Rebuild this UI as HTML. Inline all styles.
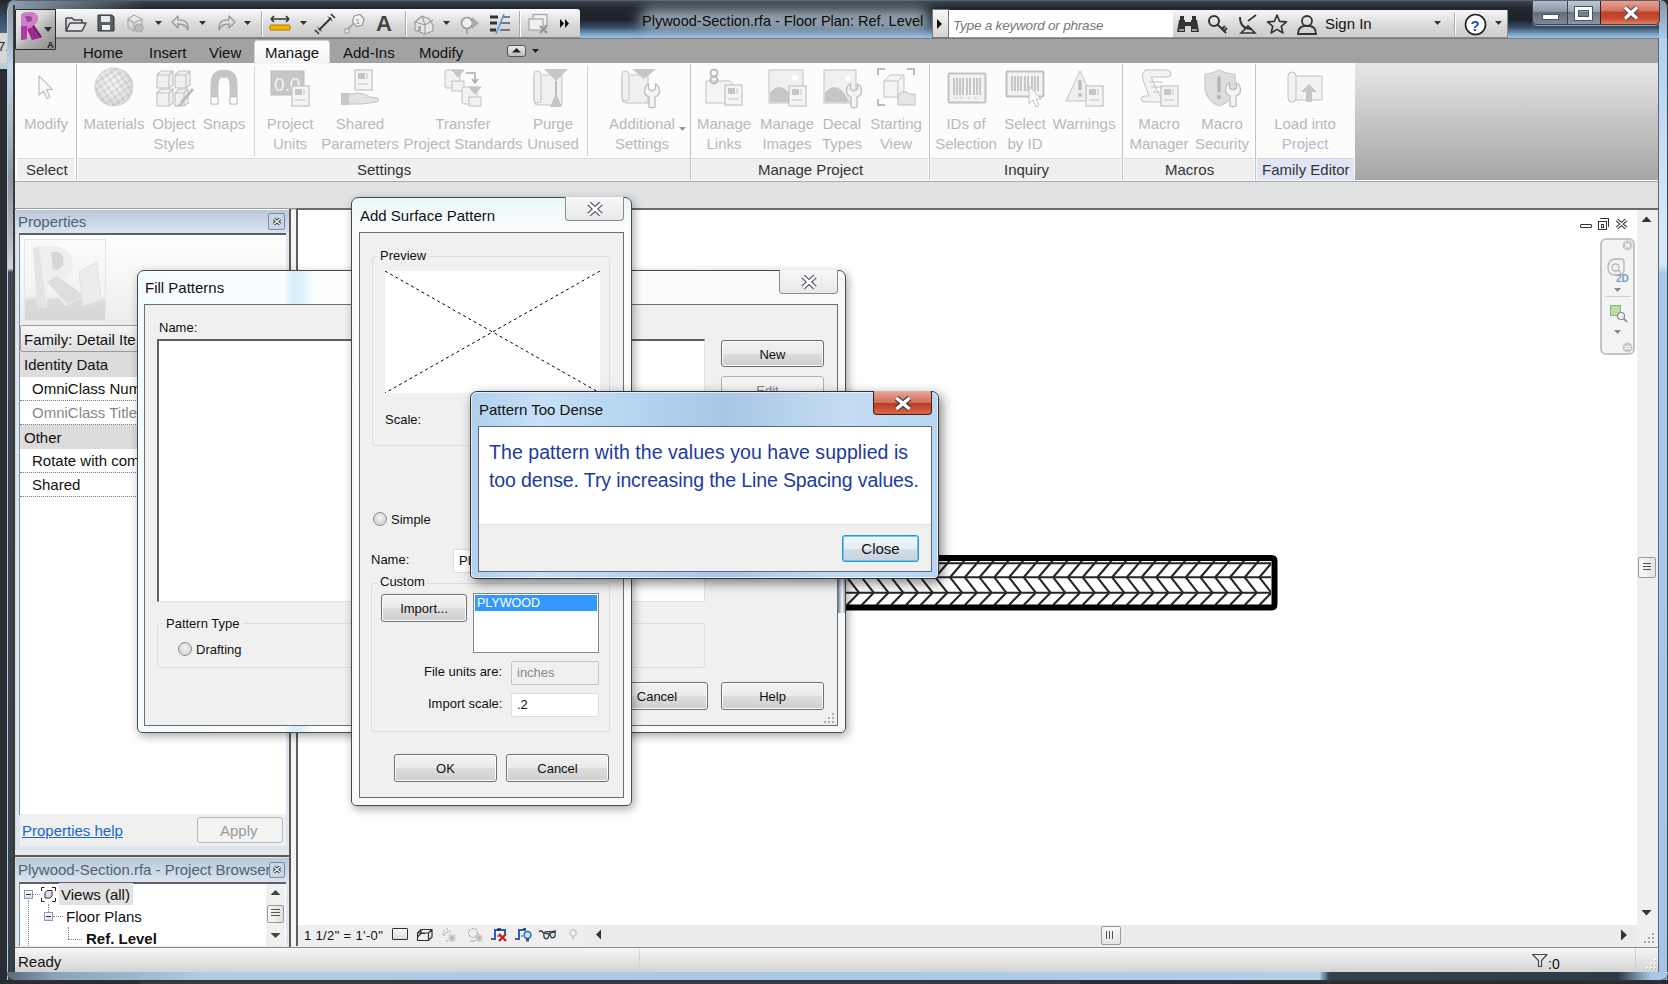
<!DOCTYPE html>
<html><head><meta charset="utf-8">
<style>
*{margin:0;padding:0;box-sizing:border-box}
html,body{width:1668px;height:984px;overflow:hidden;background:#2b2d33;font-family:"Liberation Sans",sans-serif;}
.a{position:absolute}
.t{position:absolute;white-space:nowrap;line-height:1}
</style></head><body>
<!-- desktop strip left -->
<div class="a" style="left:0;top:0;width:8px;height:984px;background:#2a2c33"></div>
<!-- window frame -->
<div class="a" style="left:0;top:33px;width:8px;height:31px;background:#d6d6d6"></div>
<div class="a" style="left:0;top:63px;width:8px;height:6px;background:#b4d4d4"></div>
<div class="a" style="left:0;top:0;width:8px;height:33px;background:linear-gradient(#22262c,#4a6a8a)"></div>
<div class="t" style="left:-2px;top:40px;font-size:13px;color:#222">7.(</div>
<div class="a" id="frame" style="left:7px;top:0;width:1660px;height:980px;border-radius:7px 7px 0 0;border-left:1px solid #555;background:linear-gradient(180deg,#8a9aaa 0%,#b8cadc 5%,#c8dcf0 8%,#a8b8c8 25%,#6e7e90 60%,#7e90a4 100%);"></div>
<div class="a" style="left:1658px;top:38px;width:10px;height:942px;background:linear-gradient(180deg,#b0d0ee 0%,#d4e6f6 18%,#d8e8f8 24%,#a8c8ec 25%,#a4c4e8 100%);border-right:1px solid #3a4a5a;border-left:1px solid #6a7a8a"></div>
<div class="a" style="left:1659px;top:4px;width:8px;height:34px;border-radius:0 6px 0 0;background:linear-gradient(180deg,#8a9cb0,#a8cbec)"></div>
<div class="a" style="left:7px;top:5px;width:8px;height:975px;border-radius:6px 0 0 0;border-left:1px solid #c0c8d0;border-right:2px solid #3a3a3a;background:linear-gradient(180deg,#8e9eae 0%,#a8bccf 4%,#c4d8ec 6.5%,#b4c4d4 10%,#a4b4c4 13%,#8a96a2 18%,#b8c2cc 25%,#d0d8e0 27%,#3a4858 27.4%,#34424f 100%)"></div>
<!-- title glass -->
<div class="a" style="left:15px;top:0px;width:1644px;height:39px;border-top:1px solid #5a6068;background:linear-gradient(180deg,#3a4450 0%,#202830 20%,#1c232c 50%,#3a5068 70%,#7ea4c8 88%,#a8cdef 100%)"></div>
<div class="a" style="left:15px;top:1px;width:130px;height:9px;background:linear-gradient(90deg,#8a9aaa,rgba(134,150,166,0))"></div>
<div class="a" style="left:640px;top:9px;width:290px;height:22px;border-radius:11px;background:rgba(185,200,215,0.8);filter:blur(7px)"></div>
<!-- tabs row -->
<div class="a" style="left:15px;top:38px;width:1644px;height:25px;background:#a2a2a2;border-top:1px solid #7a7a7a"></div>
<!-- ribbon body -->
<div class="a" style="left:15px;top:63px;width:1643px;height:118px;background:#fcfcfc"></div>
<!-- gray strip -->
<div class="a" style="left:15px;top:181px;width:1644px;height:28px;background:#e1e2e4;border-top:1px solid #a7a7a7;border-bottom:1px solid #9a9a9a"></div>



<!-- ===== TABS ===== -->
<div class="a" style="left:254px;top:40px;width:76px;height:24px;background:linear-gradient(#ffffff,#f4f4f4);border:1px solid #d0d0d0;border-bottom:none;border-radius:3px 3px 0 0"></div>
<div class="t" style="left:83px;top:45px;font-size:15px;color:#111">Home</div>
<div class="t" style="left:149px;top:45px;font-size:15px;color:#111">Insert</div>
<div class="t" style="left:209px;top:45px;font-size:15px;color:#111">View</div>
<div class="t" style="left:265px;top:45px;font-size:15px;color:#111">Manage</div>
<div class="t" style="left:343px;top:45px;font-size:15px;color:#111">Add-Ins</div>
<div class="t" style="left:419px;top:45px;font-size:15px;color:#111">Modify</div>
<div class="a" style="left:507px;top:45px;width:19px;height:12px;border:1px solid #555;border-radius:3px;background:linear-gradient(#eee,#bbb)"></div>
<svg class="a" style="left:512px;top:48px" width="9" height="5"><path d="M0 4.5 L4.5 0 L9 4.5 Z" fill="#222"/></svg>
<svg class="a" style="left:532px;top:49px" width="7" height="4"><path d="M0 0h7l-3.5 4z" fill="#222"/></svg>
<!-- ===== RIBBON ===== -->
<div class="a" style="left:1355px;top:63px;width:303px;height:117px;background:linear-gradient(#e6e6e6,#a6a6a6)"></div>
<!-- label row -->
<div class="a" style="left:17px;top:158px;width:57px;height:22px;background:#efefef;border-top:1px solid #dadada"></div>
<div class="a" style="left:78px;top:158px;width:612px;height:22px;background:#efefef;border-top:1px solid #dadada"></div>
<div class="a" style="left:692px;top:158px;width:236px;height:22px;background:#efefef;border-top:1px solid #dadada"></div>
<div class="a" style="left:931px;top:158px;width:190px;height:22px;background:#efefef;border-top:1px solid #dadada"></div>
<div class="a" style="left:1124px;top:158px;width:130px;height:22px;background:#efefef;border-top:1px solid #dadada"></div>
<div class="a" style="left:1257px;top:158px;width:97px;height:22px;background:#dfe5f4;border-top:1px solid #d4dae8"></div>
<div class="a" style="left:76px;top:64px;width:1px;height:116px;background:#c4c4c4"></div>
<div class="a" style="left:690px;top:64px;width:1px;height:116px;background:#c4c4c4"></div>
<div class="a" style="left:929px;top:64px;width:1px;height:116px;background:#c4c4c4"></div>
<div class="a" style="left:1122px;top:64px;width:1px;height:116px;background:#c4c4c4"></div>
<div class="a" style="left:1255px;top:64px;width:1px;height:116px;background:#c4c4c4"></div>
<div class="a" style="left:254px;top:66px;width:1px;height:90px;background:#d4d4d4"></div>
<div class="a" style="left:587px;top:66px;width:1px;height:90px;background:#d4d4d4"></div>
<div class="t" style="left:26px;top:162px;font-size:15px;color:#333">Select</div>
<div class="t" style="left:357px;top:162px;font-size:15px;color:#333">Settings</div>
<div class="t" style="left:758px;top:162px;font-size:15px;color:#333">Manage Project</div>
<div class="t" style="left:1004px;top:162px;font-size:15px;color:#333">Inquiry</div>
<div class="t" style="left:1165px;top:162px;font-size:15px;color:#333">Macros</div>
<div class="t" style="left:1262px;top:162px;font-size:15px;color:#333">Family Editor</div>
<div class="t" style="left:-54px;width:200px;text-align:center;top:116px;font-size:15px;color:#b5b9c0">Modify</div>
<div class="t" style="left:14px;width:200px;text-align:center;top:116px;font-size:15px;color:#b5b9c0">Materials</div>
<div class="t" style="left:74px;width:200px;text-align:center;top:116px;font-size:15px;color:#b5b9c0">Object</div>
<div class="t" style="left:74px;width:200px;text-align:center;top:136px;font-size:15px;color:#b5b9c0">Styles</div>
<div class="t" style="left:124px;width:200px;text-align:center;top:116px;font-size:15px;color:#b5b9c0">Snaps</div>
<div class="t" style="left:190px;width:200px;text-align:center;top:116px;font-size:15px;color:#b5b9c0">Project</div>
<div class="t" style="left:190px;width:200px;text-align:center;top:136px;font-size:15px;color:#b5b9c0">Units</div>
<div class="t" style="left:260px;width:200px;text-align:center;top:116px;font-size:15px;color:#b5b9c0">Shared</div>
<div class="t" style="left:260px;width:200px;text-align:center;top:136px;font-size:15px;color:#b5b9c0">Parameters</div>
<div class="t" style="left:363px;width:200px;text-align:center;top:116px;font-size:15px;color:#b5b9c0">Transfer</div>
<div class="t" style="left:363px;width:200px;text-align:center;top:136px;font-size:15px;color:#b5b9c0">Project Standards</div>
<div class="t" style="left:453px;width:200px;text-align:center;top:116px;font-size:15px;color:#b5b9c0">Purge</div>
<div class="t" style="left:453px;width:200px;text-align:center;top:136px;font-size:15px;color:#b5b9c0">Unused</div>
<div class="t" style="left:542px;width:200px;text-align:center;top:116px;font-size:15px;color:#b5b9c0">Additional</div>
<div class="t" style="left:542px;width:200px;text-align:center;top:136px;font-size:15px;color:#b5b9c0">Settings</div>
<div class="t" style="left:624px;width:200px;text-align:center;top:116px;font-size:15px;color:#b5b9c0">Manage</div>
<div class="t" style="left:624px;width:200px;text-align:center;top:136px;font-size:15px;color:#b5b9c0">Links</div>
<div class="t" style="left:687px;width:200px;text-align:center;top:116px;font-size:15px;color:#b5b9c0">Manage</div>
<div class="t" style="left:687px;width:200px;text-align:center;top:136px;font-size:15px;color:#b5b9c0">Images</div>
<div class="t" style="left:742px;width:200px;text-align:center;top:116px;font-size:15px;color:#b5b9c0">Decal</div>
<div class="t" style="left:742px;width:200px;text-align:center;top:136px;font-size:15px;color:#b5b9c0">Types</div>
<div class="t" style="left:796px;width:200px;text-align:center;top:116px;font-size:15px;color:#b5b9c0">Starting</div>
<div class="t" style="left:796px;width:200px;text-align:center;top:136px;font-size:15px;color:#b5b9c0">View</div>
<div class="t" style="left:866px;width:200px;text-align:center;top:116px;font-size:15px;color:#b5b9c0">IDs of</div>
<div class="t" style="left:866px;width:200px;text-align:center;top:136px;font-size:15px;color:#b5b9c0">Selection</div>
<div class="t" style="left:925px;width:200px;text-align:center;top:116px;font-size:15px;color:#b5b9c0">Select</div>
<div class="t" style="left:925px;width:200px;text-align:center;top:136px;font-size:15px;color:#b5b9c0">by ID</div>
<div class="t" style="left:984px;width:200px;text-align:center;top:116px;font-size:15px;color:#b5b9c0">Warnings</div>
<div class="t" style="left:1059px;width:200px;text-align:center;top:116px;font-size:15px;color:#b5b9c0">Macro</div>
<div class="t" style="left:1059px;width:200px;text-align:center;top:136px;font-size:15px;color:#b5b9c0">Manager</div>
<div class="t" style="left:1122px;width:200px;text-align:center;top:116px;font-size:15px;color:#b5b9c0">Macro</div>
<div class="t" style="left:1122px;width:200px;text-align:center;top:136px;font-size:15px;color:#b5b9c0">Security</div>
<div class="t" style="left:1205px;width:200px;text-align:center;top:116px;font-size:15px;color:#b5b9c0">Load into</div>
<div class="t" style="left:1205px;width:200px;text-align:center;top:136px;font-size:15px;color:#b5b9c0">Project</div>
<svg class="a" style="left:679px;top:127px" width="7" height="4"><path d="M0 0h7l-3.5 4z" fill="#999"/></svg>
<!-- ribbon icons -->
<svg class="a" style="left:36px;top:74px" width="20" height="28"><path d="M3 2 L3 21 L7.5 17 L11 24.5 L14 23 L10.5 15.5 L16.5 15.5 Z" fill="#fafafa" stroke="#c2c2c2" stroke-width="1.3" stroke-linejoin="round"/></svg>
<svg class="a" style="left:94px;top:67px" width="40" height="40"><defs><pattern id="chk" width="8" height="8" patternUnits="userSpaceOnUse" patternTransform="rotate(10)"><rect width="8" height="8" fill="#f2f2f2"/><rect width="4" height="4" fill="#cfcfcf"/><rect x="4" y="4" width="4" height="4" fill="#cfcfcf"/></pattern><radialGradient id="sph" cx="0.45" cy="0.45" r="0.6"><stop offset="0" stop-color="#fff" stop-opacity="0.2"/><stop offset="1" stop-color="#bbb" stop-opacity="0.5"/></radialGradient></defs><circle cx="20" cy="20" r="19" fill="url(#chk)"/><circle cx="20" cy="20" r="19" fill="url(#sph)" stroke="#d4d4d4"/></svg>
<svg class="a" style="left:155px;top:69px" width="40" height="40"><g fill="#f0f0f0" stroke="#c2c2c2" stroke-width="1.1"><path d="M2 6 L6 2 L18 2 L18 16 L14 19 L2 19 Z M2 6 L14 6 L14 19 M14 6 L18 2"/><path d="M20 6 L24 2 L35 2 L35 16 L31 19 L20 19 Z M20 6 L31 6 L31 19 M31 6 L35 2"/><path d="M2 24 L6 20 L18 20 L18 34 L14 37 L2 37 Z M2 24 L14 24 L14 37 M14 24 L18 20"/><path d="M20 24 L24 20 L33 20 L33 34 L29 37 L20 37 Z M20 24 L29 24 L29 37 M29 24 L33 20"/></g><path d="M38 20 L26 34" stroke="#bdbdbd" stroke-width="3"/><path d="M26 34 Q22 36 21 38 Q25 38 28 35 Z" fill="#bdbdbd"/></svg>
<svg class="a" style="left:207px;top:68px" width="34" height="40"><path d="M4 36 L4 16 Q4 2 17 2 Q30 2 30 16 L30 36 L23 36 L23 16 Q23 9 17 9 Q11 9 11 16 L11 36 Z" fill="#c6c6c6" stroke="#c8c8c8"/><rect x="4" y="29" width="7" height="7" fill="#fff" stroke="#c2c2c2"/><rect x="23" y="29" width="7" height="7" fill="#fff" stroke="#c2c2c2"/></svg>
<svg class="a" style="left:270px;top:70px" width="42" height="38"><rect x="1" y="1" width="33" height="24" fill="#c6c6c6" stroke="#bbb"/><text x="4" y="21" font-size="19" fill="#f4f4f4" font-family="Liberation Sans">0.0</text><rect x="22" y="16" width="17" height="20" fill="#f4f4f4" stroke="#c2c2c2" stroke-width="1.2"/><rect x="25" y="19" width="7" height="6" fill="#c6c6c6"/><path d="M34 19v6M25 30h10" stroke="#c2c2c2" stroke-width="1"/></svg>
<svg class="a" style="left:340px;top:68px" width="42" height="40"><rect x="15" y="2" width="17" height="20" fill="#f4f4f4" stroke="#c2c2c2" stroke-width="1.2"/><rect x="18" y="5" width="7" height="6" fill="#c6c6c6"/><path d="M27 5v6M18 16h10" stroke="#c2c2c2" stroke-width="1"/><path d="M8 26 L18 25 Q26 26 30 29 L38 30 Q40 33 36 34 L22 36 L8 36 Z" fill="#e2e2e2" stroke="#c2c2c2"/><rect x="1" y="25" width="8" height="12" fill="#c6c6c6"/></svg>
<svg class="a" style="left:442px;top:68px" width="42" height="40"><g stroke="#c2c2c2" fill="#f2f2f2"><path d="M3 4 Q3 2 5 2 L18 2 L18 20 L5 20 Q3 20 3 18 Z"/><path d="M10 2 L22 2 L16 9 Z" fill="#c6c6c6"/><rect x="10" y="13" width="12" height="10"/><path d="M20 21 Q20 19 22 19 L35 19 L35 36 L22 36 Q20 36 20 34 Z"/><path d="M27 19 L39 19 L33 26 Z" fill="#c6c6c6"/><rect x="27" y="29" width="12" height="9"/></g><path d="M24 5 L33 5 L33 14 M30 11 L33 15 L36 11" fill="none" stroke="#aaa" stroke-width="1.5"/></svg>
<svg class="a" style="left:532px;top:67px" width="40" height="42"><g stroke="#c2c2c2" fill="#f0f0f0"><path d="M6 6 Q2 6 2 10 L2 34 Q2 38 6 38 L30 38 L30 8 L10 8"/><rect x="2" y="4" width="7" height="32" rx="3.5"/></g><path d="M12 2 L36 2 L24 14 Z" fill="#c6c6c6"/><path d="M24 14 L24 28" stroke="#bbb" stroke-width="2"/><path d="M18 40 L24 26 L30 40 Z" fill="#c6c6c6"/></svg>
<svg class="a" style="left:620px;top:67px" width="42" height="42"><g stroke="#c2c2c2" fill="#f0f0f0"><path d="M6 6 Q2 6 2 10 L2 32 Q2 36 6 36 L28 36 L28 8 L10 8"/><rect x="2" y="4" width="7" height="30" rx="3.5"/></g><path d="M12 2 L36 2 L24 12 Z" fill="#c6c6c6"/><path d="M28.5 17 L28.5 22 L32 24 L35.5 22 L35.5 17 Q39.5 19 39.5 24 Q39.5 28.5 35 30 L35 40 Q32 41.5 29 40 L29 30 Q24.5 28.5 24.5 24 Q24.5 19 28.5 17 Z" fill="#f4f4f4" stroke="#bdbdbd" stroke-width="1.3"/></svg>
<svg class="a" style="left:704px;top:67px" width="42" height="42"><path d="M2 14 L26 14 L32 20 L32 36 L2 36 Z" fill="#f4f4f4" stroke="#c2c2c2"/><circle cx="10" cy="6" r="3.5" fill="none" stroke="#bbb" stroke-width="2"/><circle cx="10" cy="13" r="3.5" fill="none" stroke="#bbb" stroke-width="2"/><rect x="21" y="18" width="17" height="20" fill="#f4f4f4" stroke="#c2c2c2" stroke-width="1.2"/><rect x="24" y="21" width="7" height="6" fill="#c6c6c6"/><path d="M33 21v6M24 32h10" stroke="#c2c2c2" stroke-width="1"/></svg>
<svg class="a" style="left:767px;top:67px" width="42" height="42"><rect x="2" y="3" width="34" height="33" fill="#f0f0f0" stroke="#c2c2c2"/><path d="M3 35 L3 26 Q12 14 22 26 L28 35 Z" fill="#c6c6c6"/><circle cx="28" cy="11" r="3" fill="#fff"/><rect x="22" y="19" width="17" height="20" fill="#f4f4f4" stroke="#c2c2c2" stroke-width="1.2"/><rect x="25" y="22" width="7" height="6" fill="#c6c6c6"/><path d="M34 22v6M25 33h10" stroke="#c2c2c2" stroke-width="1"/></svg>
<svg class="a" style="left:822px;top:67px" width="42" height="42"><rect x="2" y="3" width="32" height="33" fill="#f0f0f0" stroke="#c2c2c2"/><path d="M3 35 L3 26 Q12 14 22 26 L28 35 Z" fill="#c6c6c6"/><circle cx="26" cy="11" r="3" fill="#fff"/><path d="M28.5 17 L28.5 22 L32 24 L35.5 22 L35.5 17 Q39.5 19 39.5 24 Q39.5 28.5 35 30 L35 40 Q32 41.5 29 40 L29 30 Q24.5 28.5 24.5 24 Q24.5 19 28.5 17 Z" fill="#f4f4f4" stroke="#bdbdbd" stroke-width="1.3"/></svg>
<svg class="a" style="left:876px;top:67px" width="42" height="42"><path d="M2 8 L2 2 L9 2 M31 2 L38 2 L38 8 M2 32 L2 38 L9 38 M38 32" fill="none" stroke="#bbb" stroke-width="2"/><path d="M8 14 L14 8 L28 8 L28 24 L22 30 L8 30 Z M8 14 L22 14 L22 30 M22 14 L28 8" fill="#f4f4f4" stroke="#c2c2c2"/><path d="M22 28 L26 25 L31 25 L33 27 L39 27 L39 38 L22 38 Z" fill="#e6e6e6" stroke="#c2c2c2"/></svg>
<svg class="a" style="left:947px;top:72px" width="42" height="34"><rect x="1.5" y="1.5" width="37" height="29" rx="1" fill="#f2f2f2" stroke="#c2c2c2" stroke-width="2"/><path d="M7 6v17M10 6v17M13 6v17M16 6v17M20 6v17M23 6v17M27 6v17M30 6v17M33 6v17" stroke="#bbb" stroke-width="1.6"/><path d="M7 26h3M13 26h3M20 26h3M27 26h3" stroke="#ccc"/></svg>
<svg class="a" style="left:1005px;top:70px" width="42" height="40"><rect x="1.5" y="1.5" width="37" height="25" rx="1" fill="#f2f2f2" stroke="#c2c2c2" stroke-width="2"/><path d="M7 6v15M10 6v15M13 6v15M16 6v15M20 6v15M23 6v15M27 6v15M30 6v15M33 6v15" stroke="#bbb" stroke-width="1.6"/><path d="M24 16 L24 34 L28 30 L31 37 L34 35 L31 29 L36 29 Z" fill="#fafafa" stroke="#c2c2c2"/></svg>
<svg class="a" style="left:1064px;top:68px" width="42" height="40"><path d="M16 3 L30 33 L2 33 Z" fill="#efefef" stroke="#c2c2c2" stroke-linejoin="round"/><path d="M16 12v10" stroke="#bdbdbd" stroke-width="3.5"/><circle cx="16" cy="27" r="2" fill="#bdbdbd"/><rect x="22" y="18" width="17" height="20" fill="#f4f4f4" stroke="#c2c2c2" stroke-width="1.2"/><rect x="25" y="21" width="7" height="6" fill="#c6c6c6"/><path d="M34 21v6M25 32h10" stroke="#c2c2c2" stroke-width="1"/></svg>
<svg class="a" style="left:1139px;top:68px" width="42" height="40"><path d="M6 2 L28 2 Q32 2 32 6 Q32 9 28 9 L12 9 Q14 12 16 18 L24 34 L6 34 Q2 34 2 31 Q2 28 6 28 L10 28 L4 12 Q2 6 6 2 Z" fill="#f2f2f2" stroke="#c2c2c2"/><path d="M10 14h14M12 19h10M14 24h8" stroke="#c2c2c2"/><rect x="22" y="18" width="17" height="20" fill="#f4f4f4" stroke="#c2c2c2" stroke-width="1.2"/><rect x="25" y="21" width="7" height="6" fill="#c6c6c6"/><path d="M34 21v6M25 32h10" stroke="#c2c2c2" stroke-width="1"/></svg>
<svg class="a" style="left:1203px;top:68px" width="40" height="40"><path d="M16 2 Q24 6 32 6 L32 18 Q32 32 16 38 Q2 32 2 18 L2 6 Q8 6 16 2 Z" fill="#dedede" stroke="#cacaca" stroke-width="1.2"/><path d="M16 10v13" stroke="#b4b4b4" stroke-width="3.5" stroke-linecap="round"/><circle cx="16" cy="29" r="2.2" fill="#b4b4b4"/><path d="M26.5 15 L26.5 20 L30 22 L33.5 20 L33.5 15 Q37.5 17 37.5 22 Q37.5 26.5 33 28 L33 38 Q30 39.5 27 38 L27 28 Q22.5 26.5 22.5 22 Q22.5 17 26.5 15 Z" fill="#f4f4f4" stroke="#bdbdbd" stroke-width="1.3"/></svg>
<svg class="a" style="left:1287px;top:70px" width="40" height="36"><g stroke="#c2c2c2" fill="#f2f2f2"><path d="M6 6 L35 6 L35 30 L6 30"/><rect x="1" y="2" width="8" height="30" rx="4"/></g><path d="M14 22 L22 14 L30 22 L25 22 L25 32 L19 32 L19 22 Z" fill="#c6c6c6"/></svg>
<!-- ===== TITLE BAR CONTENT ===== -->
<div class="t" style="left:642px;top:14px;font-size:14.5px;color:#0a0a0a">Plywood-Section.rfa - Floor Plan: Ref. Level</div>
<!-- app button -->
<div class="a" style="left:15px;top:9px;width:41px;height:41px;background:linear-gradient(140deg,#eeeeee 0%,#d6d6d6 40%,#b0b0b0 60%,#8c8c8c 100%);border:1px solid #2a2a2a;border-radius:1px"></div>
<svg class="a" style="left:18px;top:11px" width="26" height="30" viewBox="0 0 26 30"><path d="M3 4 Q4 1 10 1 L14 1 Q21 2 20 9 Q19 14 14 15 L22 27 L14 29 L9 18 L9 28 L3 29 Z" fill="#d080c8"/><path d="M7 5 L12 5 Q15 6 14 9 Q13 11 9 11 Z" fill="#9a4a90"/><path d="M9 18 L14 29 L22 27 L15 16 Z" fill="#a02890"/><path d="M3 15 L9 15 L9 28 L3 29 Z" fill="#b03aa0"/><path d="M14 15 L22 27 L24 26 L16 14 Z" fill="#701a68"/></svg>
<svg class="a" style="left:44px;top:27px" width="9" height="6"><path d="M0 0h8l-4 5z" fill="#2a3040"/></svg>
<div class="t" style="left:47px;top:40px;font-size:9.5px;font-weight:bold;color:#222">A</div>
<!-- QAT -->
<div class="a" style="left:56px;top:9px;width:524px;height:29px;background:linear-gradient(#fafafa,#d9d9d9 55%,#c9c9c9);border-radius:0 3px 0 0;box-shadow:inset 0 -1px 0 #8a8a8a"></div>
<svg class="a" style="left:64px;top:14px" width="24" height="20" viewBox="0 0 24 20"><path d="M2 4 L8 4 L10 6 L18 6 L18 9 M2 4 L2 17 L18 17 L22 9 L6 9 L2 17" fill="#e8e8e8" stroke="#445" stroke-width="1.5" stroke-linejoin="round"/></svg>
<svg class="a" style="left:96px;top:13px" width="20" height="20" viewBox="0 0 20 20"><path d="M2 2h14l2 2v14H2z" fill="#56606c" stroke="#333" stroke-width="1"/><rect x="5" y="3" width="9" height="6" fill="#e8e8e8"/><rect x="6" y="12" width="8" height="5" fill="#f4f4f4"/></svg>
<svg class="a" style="left:124px;top:13px" width="24" height="22"><g fill="none" stroke="#aaa" stroke-width="1.2"><path d="M4 6 L10 2 L18 6 L18 14 L10 18 L4 14 Z M4 6 L10 10 L18 6 M10 10 L10 18"/><circle cx="15" cy="15" r="4" fill="#bbb"/></g></svg>
<svg class="a" style="left:155px;top:21px" width="8" height="5"><path d="M0 0h7l-3.5 4z" fill="#333"/></svg>
<svg class="a" style="left:170px;top:14px" width="22" height="18"><path d="M8 2 L2 8 L8 14 L8 10 Q16 10 18 16 Q19 5 8 6 Z" fill="none" stroke="#999" stroke-width="1.3" stroke-linejoin="round"/></svg>
<svg class="a" style="left:199px;top:21px" width="8" height="5"><path d="M0 0h7l-3.5 4z" fill="#333"/></svg>
<svg class="a" style="left:215px;top:14px" width="22" height="18"><path d="M14 2 L20 8 L14 14 L14 10 Q6 10 4 16 Q3 5 14 6 Z" fill="none" stroke="#999" stroke-width="1.3" stroke-linejoin="round"/></svg>
<svg class="a" style="left:244px;top:21px" width="8" height="5"><path d="M0 0h7l-3.5 4z" fill="#333"/></svg>
<div class="a" style="left:261px;top:11px;width:1px;height:26px;background:#aaa;box-shadow:1px 0 0 #fff"></div>
<svg class="a" style="left:268px;top:14px" width="24" height="18"><path d="M3 5h18M3 5l3-3M3 5l3 3M21 5l-3-3M21 5l-3 3" stroke="#333" stroke-width="1.6" fill="none"/><rect x="2" y="11" width="20" height="5" rx="1" fill="#f0b400" stroke="#b07800"/></svg>
<svg class="a" style="left:300px;top:21px" width="8" height="5"><path d="M0 0h7l-3.5 4z" fill="#333"/></svg>
<svg class="a" style="left:314px;top:13px" width="22" height="22"><path d="M5 17 L17 5" stroke="#333" stroke-width="1.8"/><path d="M3 13 L5 17 L9 19 Z M19 9 L17 5 L13 3 Z" fill="#333"/><path d="M1 17 L5 21 M17 1 L21 5" stroke="#333" stroke-width="1.6"/></svg>
<svg class="a" style="left:344px;top:13px" width="22" height="22"><path d="M10 3 L16 1.5 L20 6 L18.5 12 L12.5 13.5 L8.5 9 Z" fill="#f2f2f2" stroke="#999" stroke-width="1.2"/><text x="11.5" y="11" font-size="8" fill="#888" font-family="Liberation Sans">1</text><path d="M9 11 L3 17" stroke="#999" stroke-width="1.2"/><rect x="1" y="16" width="4" height="4" fill="#eee" stroke="#999"/></svg>
<div class="t" style="left:376px;top:13px;font-size:22px;font-weight:bold;color:#444">A</div>
<div class="a" style="left:405px;top:11px;width:1px;height:26px;background:#aaa;box-shadow:1px 0 0 #fff"></div>
<svg class="a" style="left:413px;top:13px" width="22" height="22"><path d="M2 9 L9 3 L16 6 L20 12 L20 18 L12 21 L2 17 Z" fill="#e6e6e6" stroke="#999" stroke-width="1.2" stroke-linejoin="round"/><path d="M2 9 L12 12 L20 7 M12 12 L12 21 M9 3 L12 12" fill="none" stroke="#999" stroke-width="1.1"/><rect x="5" y="13" width="3" height="5" fill="#aaa"/></svg>
<svg class="a" style="left:443px;top:21px" width="8" height="5"><path d="M0 0h7l-3.5 4z" fill="#333"/></svg>
<svg class="a" style="left:459px;top:13px" width="22" height="22"><circle cx="8" cy="10" r="5.5" fill="#f0f0f0" stroke="#999" stroke-width="1.6"/><path d="M13 4 L20 10 L13 16 Z" fill="#aaa"/><path d="M8 16 V21" stroke="#999" stroke-width="1.4"/></svg>
<svg class="a" style="left:489px;top:13px" width="22" height="22"><path d="M1 4h8M1 10h7M1 17h6" stroke="#333" stroke-width="3"/><path d="M13 4h8M12 10h9M11 17h10" stroke="#555" stroke-width="1.5"/><path d="M7 21 L15 1" stroke="#4a9af0" stroke-width="1.6"/></svg>
<div class="a" style="left:519px;top:11px;width:1px;height:26px;background:#aaa;box-shadow:1px 0 0 #fff"></div>
<svg class="a" style="left:527px;top:13px" width="22" height="22"><g fill="#f0f0f0" stroke="#aaa" stroke-width="1.3"><rect x="6" y="1.5" width="14" height="11"/><rect x="2" y="6" width="14" height="11"/></g><path d="M13 13 L20 20 M20 13 L13 20" stroke="#999" stroke-width="2.4"/></svg>
<svg class="a" style="left:560px;top:19px" width="10" height="9"><path d="M0 0 L4 4.5 L0 9 Z M5 0 L9 4.5 L5 9 Z" fill="#111"/></svg>
<!-- search -->
<div class="a" style="left:932px;top:9px;width:17px;height:29px;background:linear-gradient(#f8f8f8,#d4d4d4);border:1px solid #777"></div>
<svg class="a" style="left:937px;top:19px" width="6" height="10"><path d="M0 0 L5 5 L0 10 Z" fill="#111"/></svg>
<div class="a" style="left:949px;top:10px;width:224px;height:28px;background:#fff;border-bottom:1px solid #999"></div>
<div class="t" style="left:953px;top:19px;font-size:13.5px;letter-spacing:-0.2px;font-style:italic;color:#777">Type a keyword or phrase</div>
<div class="a" style="left:1173px;top:10px;width:335px;height:28px;background:linear-gradient(#f6f6f6,#d8d8d8 60%,#cdcdcd);border:1px solid #8c8c8c;border-left:none;border-top:none"></div>
<svg class="a" style="left:1176px;top:14px" width="24" height="20"><g fill="#333"><path d="M3 6h6v12H1z M15 6h6l2 12h-8z M9 8h6v4H9z"/><rect x="4" y="2" width="4" height="4"/><rect x="16" y="2" width="4" height="4"/></g><path d="M3 16h5M16 16h5" stroke="#fff" stroke-width="1"/></svg>
<svg class="a" style="left:1206px;top:13px" width="24" height="22"><circle cx="8" cy="8" r="5" fill="none" stroke="#333" stroke-width="2"/><path d="M11 11 L20 20 M16 16 L19 13 M18 18 L21 15" stroke="#333" stroke-width="2"/></svg>
<svg class="a" style="left:1236px;top:13px" width="24" height="22"><path d="M5 20 L12 13 L19 20 Z" fill="none" stroke="#333" stroke-width="1.6"/><path d="M4 4 Q4 16 16 16" fill="none" stroke="#333" stroke-width="2"/><path d="M12 8 L20 2" stroke="#333" stroke-width="1.6"/></svg>
<svg class="a" style="left:1266px;top:13px" width="22" height="22"><path d="M11 2 L13.6 8.4 L20.5 8.9 L15.2 13.3 L16.9 20 L11 16.4 L5.1 20 L6.8 13.3 L1.5 8.9 L8.4 8.4 Z" fill="none" stroke="#333" stroke-width="1.6" stroke-linejoin="round"/></svg>
<svg class="a" style="left:1296px;top:13px" width="22" height="22"><circle cx="11" cy="8" r="5" fill="none" stroke="#333" stroke-width="1.8"/><path d="M2 21 Q2 14 8 13 L14 13 Q20 14 20 21 Z" fill="none" stroke="#333" stroke-width="1.8"/></svg>
<div class="t" style="left:1325px;top:16px;font-size:15px;color:#111">Sign In</div>
<svg class="a" style="left:1434px;top:21px" width="8" height="5"><path d="M0 0h7l-3.5 4z" fill="#333"/></svg>
<div class="a" style="left:1454px;top:13px;width:1px;height:22px;background:#aaa;box-shadow:1px 0 0 #fff"></div>
<svg class="a" style="left:1464px;top:13px" width="23" height="23"><circle cx="11.5" cy="11.5" r="10" fill="#fff" stroke="#222" stroke-width="1.6"/><text x="6.5" y="17.5" font-size="15" font-weight="bold" fill="#1a4fb0" font-family="Liberation Sans">?</text></svg>
<svg class="a" style="left:1495px;top:21px" width="8" height="5"><path d="M0 0h7l-3.5 4z" fill="#333"/></svg>
<!-- window controls -->
<div class="a" style="left:1532px;top:1px;width:128px;height:24px;border:1px solid #3a4450;border-top:none;border-radius:0 0 5px 5px;box-shadow:0 1px 0 rgba(255,255,255,0.5)"></div>
<div class="a" style="left:1533px;top:1px;width:34px;height:23px;border-radius:0 0 0 4px;background:linear-gradient(#b4bec8 0%,#8a98a6 45%,#5e6e7e 50%,#7a8a9a 100%)"></div>
<div class="a" style="left:1543px;top:15px;width:15px;height:4px;background:#fff;box-shadow:0 0 0 1px #4a5562"></div>
<div class="a" style="left:1567px;top:1px;width:1px;height:23px;background:#3a4450"></div>
<div class="a" style="left:1568px;top:1px;width:32px;height:23px;background:linear-gradient(#c0cad4 0%,#98a6b4 45%,#6a7a8a 50%,#8898a8 100%)"></div>
<div class="a" style="left:1575px;top:7px;width:17px;height:13px;border:3px solid #fff;box-shadow:0 0 0 1px #4a5562,inset 0 0 0 1px #4a5562"></div>
<div class="a" style="left:1600px;top:1px;width:1px;height:23px;background:#3a2020"></div>
<div class="a" style="left:1601px;top:1px;width:58px;height:23px;border-radius:0 0 4px 0;background:linear-gradient(#e8a090 0%,#d47a68 40%,#c04028 50%,#c84a30 75%,#e08060 100%)"></div>
<svg class="a" style="left:1622px;top:5px" width="18" height="16"><path d="M3 2.5 L15 13.5 M15 2.5 L3 13.5" stroke="#4a4a5a" stroke-width="5.5"/><path d="M3 2.5 L15 13.5 M15 2.5 L3 13.5" stroke="#fff" stroke-width="3.2"/></svg>
<!-- ===== LEFT PANELS ===== -->
<div class="a" style="left:15px;top:210px;width:281px;height:739px;background:#d4d8dd"></div>
<!-- properties -->
<div class="a" style="left:16px;top:209px;width:274px;height:641px;background:#dce6f1;border-right:1px solid #555;border-top:1px solid #fff"></div>
<div class="a" style="left:16px;top:210px;width:273px;height:23px;background:linear-gradient(#b9c8d8,#dae5f1)"></div>
<div class="t" style="left:18px;top:214px;font-size:15px;color:#4f6276">Properties</div>
<div class="a" style="left:268px;top:213px;width:17px;height:17px;border:1px solid #7a8aa6;border-radius:2px;background:#c9d6e4"></div>
<svg class="a" style="left:272px;top:217px" width="10" height="9"><path d="M2 2 L8 7 M8 2 L2 7" stroke="#333" stroke-width="3.4"/><path d="M2 2 L8 7 M8 2 L2 7" stroke="#fff" stroke-width="1.4"/></svg>
<div class="a" style="left:19px;top:233px;width:267px;height:582px;background:#fff;border-top:2px solid #5f5f5f;border-left:1px solid #888"></div>
<div class="a" style="left:20px;top:235px;width:266px;height:90px;background:linear-gradient(#ffffff,#f6f6f6 50%,#ececec)"></div>
<div class="a" style="left:24px;top:239px;width:82px;height:82px;background:linear-gradient(180deg,#fbfbfb 0%,#f2f2f2 70%,#dcdcdc 75%,#d6d6d6 100%);border:1px solid #e6e6e6"></div>
<svg class="a" style="left:25px;top:240px" width="80" height="80" viewBox="0 0 80 80"><path d="M8 8 L14 6 L22 68 L12 68 Z" fill="#e4e4e4"/><path d="M14 6 L30 6 Q48 8 48 26 Q46 38 34 40 L60 56 L40 66 L22 40 L22 68 Z" fill="#efefef"/><path d="M26 12 L34 12 Q40 16 38 24 Q36 30 28 30 Z" fill="#d6d6d6"/><path d="M32 36 L60 56 L42 64 L22 42 Z" fill="#dedede"/><path d="M54 32 L72 22 L76 60 L58 66 Z" fill="#ececec" stroke="#e2e2e2"/></svg>
<div class="a" style="left:20px;top:325px;width:120px;height:27px;background:linear-gradient(#f6f6f6,#dedede);border:1px solid #9a9a9a;border-radius:2px"></div>
<div class="t" style="left:24px;top:332px;font-size:15px;color:#111">Family: Detail Ite</div>
<div class="a" style="left:20px;top:352px;width:266px;height:25px;background:#dcdcdc"></div>
<div class="t" style="left:24px;top:357px;font-size:15px;color:#111">Identity Data</div>
<div class="t" style="left:32px;top:381px;font-size:15px;color:#111">OmniClass Num</div>
<div class="a" style="left:20px;top:400px;width:266px;height:1px;border-top:1px dotted #777"></div>
<div class="t" style="left:32px;top:405px;font-size:15px;color:#888">OmniClass Title</div>
<div class="a" style="left:20px;top:424px;width:266px;height:1px;border-top:1px dotted #777"></div>
<div class="a" style="left:20px;top:425px;width:266px;height:24px;background:#dcdcdc"></div>
<div class="t" style="left:24px;top:430px;font-size:15px;color:#111">Other</div>
<div class="t" style="left:32px;top:453px;font-size:15px;color:#111">Rotate with com</div>
<div class="a" style="left:20px;top:472px;width:266px;height:1px;border-top:1px dotted #777"></div>
<div class="t" style="left:32px;top:477px;font-size:15px;color:#111">Shared</div>
<div class="a" style="left:20px;top:496px;width:266px;height:1px;border-top:1px dotted #777"></div>
<!-- footer -->
<div class="a" style="left:20px;top:814px;width:266px;height:32px;background:#f0f0f0"></div>
<div class="t" style="left:22px;top:823px;font-size:15px;color:#1a66cc;text-decoration:underline">Properties help</div>
<div class="a" style="left:197px;top:817px;width:86px;height:26px;border:1px solid #b8b8b8;border-radius:3px;background:#f3f3f3"></div>
<div class="t" style="left:220px;top:823px;font-size:15px;color:#9a9a9a">Apply</div>
<div class="a" style="left:15px;top:850px;width:281px;height:7px;background:#e8e8e8;border-bottom:2px solid #5a5a5a"></div>
<!-- project browser -->
<div class="a" style="left:16px;top:857px;width:274px;height:92px;background:#dce6f1;border-right:1px solid #555"></div>
<div class="a" style="left:16px;top:858px;width:273px;height:24px;background:linear-gradient(#b9c8d8,#dae5f1)"></div>
<div class="t" style="left:18px;top:862px;font-size:15px;color:#4f6276">Plywood-Section.rfa - Project Browser</div>
<div class="a" style="left:269px;top:862px;width:16px;height:16px;border:1px solid #7a8aa6;border-radius:2px;background:#c9d6e4"></div>
<div class="a" style="left:19px;top:882px;width:267px;height:64px;background:#fff;border-top:2px solid #5f5f5f;border-left:1px solid #888"></div>
<div class="a" style="left:266px;top:884px;width:19px;height:62px;background:#f0f0f0"></div>

<!-- project browser tree -->
<div class="a" style="left:59px;top:883px;width:74px;height:22px;background:#e2e2e2"></div>
<div class="a" style="left:24px;top:890px;width:9px;height:9px;border:1px solid #8a9ab0;background:linear-gradient(#fff,#dde)"></div>
<div class="a" style="left:26px;top:894px;width:5px;height:1px;background:#333"></div>
<div class="a" style="left:33px;top:894px;width:7px;height:0;border-top:1px dotted #888"></div>
<div class="a" style="left:28px;top:900px;width:0;height:46px;border-left:1px dotted #888"></div>
<svg class="a" style="left:41px;top:887px" width="15" height="15"><path d="M0.5 4V0.5h3M11 0.5h3.5V4M14.5 11v3.5H11M3.5 14.5H0.5V11" fill="none" stroke="#222" stroke-width="1"/><path d="M4 5.5 L6 3.5 L11 3.5 L11 9 L9 11 L4 11 Z" fill="#dde" stroke="#333" stroke-width="1"/></svg>
<div class="t" style="left:61px;top:887px;font-size:15px;color:#111">Views (all)</div>
<div class="a" style="left:48px;top:904px;width:0;height:10px;border-left:1px dotted #888"></div>
<div class="a" style="left:44px;top:912px;width:9px;height:9px;border:1px solid #8a9ab0;background:linear-gradient(#fff,#dde)"></div>
<div class="a" style="left:46px;top:916px;width:5px;height:1px;background:#333"></div>
<div class="a" style="left:53px;top:916px;width:10px;height:0;border-top:1px dotted #888"></div>
<div class="t" style="left:66px;top:909px;font-size:15px;color:#111">Floor Plans</div>
<div class="a" style="left:68px;top:927px;width:0;height:12px;border-left:1px dotted #888"></div>
<div class="a" style="left:68px;top:939px;width:14px;height:0;border-top:1px dotted #888"></div>
<div class="t" style="left:86px;top:931px;font-size:15px;font-weight:bold;color:#111">Ref. Level</div>
<svg class="a" style="left:270px;top:889px" width="11" height="7"><path d="M0.5 6 L5.5 1 L10.5 6 Z" fill="#444"/></svg>
<svg class="a" style="left:270px;top:932px" width="11" height="7"><path d="M0.5 1 L5.5 6 L10.5 1 Z" fill="#444"/></svg>
<div class="a" style="left:267px;top:905px;width:17px;height:18px;border:1px solid #9a9a9a;border-radius:2px;background:linear-gradient(90deg,#f8f8f8,#e0e0e0)"></div>
<div class="a" style="left:271px;top:909px;width:9px;height:1px;background:#555;box-shadow:0 3px 0 #555,0 6px 0 #555"></div>
<svg class="a" style="left:272px;top:865px" width="10" height="9"><path d="M2 2 L8 7 M8 2 L2 7" stroke="#333" stroke-width="3.4"/><path d="M2 2 L8 7 M8 2 L2 7" stroke="#fff" stroke-width="1.4"/></svg>
<!-- ===== VIEW AREA ===== -->
<div class="a" style="left:289px;top:210px;width:1370px;height:738px;background:#ececec"></div>
<div class="a" style="left:296px;top:208px;width:1363px;height:2px;background:#6a6a6a"></div><div class="a" style="left:289px;top:209px;width:2px;height:1px;background:#555"></div>
<div class="a" style="left:289px;top:210px;width:2px;height:738px;background:#5a5a5a"></div>
<div class="a" style="left:291px;top:210px;width:5px;height:738px;background:#f4f4f4"></div>
<div class="a" style="left:296px;top:210px;width:2px;height:736px;background:#5f5f5f"></div>
<div class="a" style="left:298px;top:210px;width:1339px;height:715px;background:#fff"></div>
<!-- vertical scrollbar -->
<div class="a" style="left:1637px;top:210px;width:20px;height:716px;background:#efefef"></div>
<svg class="a" style="left:1641px;top:215px" width="11" height="8"><path d="M0.5 7 L5.5 1.5 L10.5 7 Z" fill="#333"/></svg>
<svg class="a" style="left:1641px;top:909px" width="11" height="8"><path d="M0.5 1 L5.5 6.5 L10.5 1 Z" fill="#333"/></svg>
<div class="a" style="left:1638px;top:557px;width:18px;height:21px;border:1px solid #9a9a9a;border-radius:2px;background:linear-gradient(90deg,#f8f8f8,#e4e4e4)"></div>
<div class="a" style="left:1643px;top:563px;width:8px;height:1px;background:#555;box-shadow:0 3px 0 #555,0 6px 0 #555"></div>
<!-- view controls -->
<div class="a" style="left:298px;top:925px;width:1339px;height:21px;background:#efefef"></div>
<div class="t" style="left:304px;top:929px;font-size:13px;letter-spacing:0.35px;color:#111">1 1/2" = 1'-0"</div>
<div class="a" style="left:392px;top:928px;width:16px;height:12px;border:1px solid #333;border-radius:1px;background:linear-gradient(#fafafa,#d8dde4)"></div>
<svg class="a" style="left:416px;top:927px" width="18" height="16" viewBox="0 0 18 16"><path d="M1.5 6 L5 2.5 L16 2.5 L16 10 L12.5 13.5 L1.5 13.5 Z M1.5 6 L12.5 6 L12.5 13.5 M12.5 6 L16 2.5 M1.5 10 L5 6.5 L5 2.5 M5 6.5 L9 6.5" fill="none" stroke="#333" stroke-width="1.2"/></svg>
<svg class="a" style="left:440px;top:927px" width="18" height="16"><g stroke="#aaa" stroke-width="1.1" fill="none"><path d="M7 1v2M2 7h2M3.5 3.5l1.2 1.2M10.5 3.5l-1.2 1.2M7 13v2"/><path d="M4.5 9 A3 3 0 0 1 9.5 6" stroke-dasharray="1.5 1"/></g><path d="M9 8 L15 14 M15 8 L9 14 M12 7 L12 15 M8 11 L16 11" stroke="#bbb" stroke-width="1.2"/></svg>
<svg class="a" style="left:467px;top:927px" width="18" height="16"><g stroke="#aaa" stroke-width="1.1" fill="none"><circle cx="6" cy="6" r="4.5" stroke-dasharray="2 1.2"/><path d="M3 14h5"/></g><path d="M9 8 L15 14 M15 8 L9 14 M12 7 L12 15 M8 11 L16 11" stroke="#bbb" stroke-width="1.2"/></svg>
<svg class="a" style="left:490px;top:927px" width="18" height="16"><path d="M5 13 V3 H15 V7" fill="none" stroke="#2563c0" stroke-width="2"/><path d="M1 12 H4 M8 4 V2 H11" stroke="#333" stroke-width="1.3"/><path d="M7 9 H10" stroke="#d02020" stroke-width="1.2"/><path d="M9 7 L16 14 M16 7 L9 14" stroke="#d41818" stroke-width="2.2"/></svg>
<svg class="a" style="left:514px;top:927px" width="18" height="16"><path d="M5 13 V3 H12" fill="none" stroke="#2563c0" stroke-width="2"/><path d="M1 12 H4 M9 2 H12" stroke="#333" stroke-width="1.3"/><path d="M7 9 H9" stroke="#d02020" stroke-width="1.2"/><circle cx="13.5" cy="8" r="3.5" fill="#bfe0ff" stroke="#2563c0" stroke-width="1.4"/><rect x="12" y="11.5" width="3" height="3" fill="#555"/></svg>
<svg class="a" style="left:538px;top:928px" width="19" height="14"><path d="M1 4 Q3 1 5 5 M5 5 Q9 3 13 4 L18 3" fill="none" stroke="#333" stroke-width="1.3"/><path d="M6 5 Q5 10 8 11 Q11 11 11 6 Z M12 5 Q12 10 15 10 Q18 9 17 4 Z" fill="#cfe6f5" stroke="#333" stroke-width="1.2"/></svg>
<svg class="a" style="left:568px;top:928px" width="10" height="14"><g fill="none" stroke="#bbb" stroke-width="1.1"><circle cx="5" cy="5" r="3.2"/><path d="M3.5 9h3M4 11h2"/></g></svg>
<div class="a" style="left:585px;top:925px;width:1052px;height:20px;background:#ebebeb"></div>
<svg class="a" style="left:595px;top:929px" width="7" height="11"><path d="M6 0.5 L1 5.5 L6 10.5 Z" fill="#333"/></svg>
<svg class="a" style="left:1620px;top:929px" width="8" height="12"><path d="M1 0.5 L7 6 L1 11.5 Z" fill="#333"/></svg>
<div class="a" style="left:1101px;top:926px;width:20px;height:19px;border:1px solid #9a9a9a;border-radius:2px;background:linear-gradient(#f8f8f8,#e4e4e4)"></div>
<div class="a" style="left:1106px;top:931px;width:1px;height:8px;background:#555;box-shadow:3px 0 0 #555,6px 0 0 #555"></div>
<div class="a" style="left:1637px;top:926px;width:20px;height:20px;background:#efefef"></div>
<!-- view min/restore/close -->
<div class="a" style="left:1580px;top:224px;width:12px;height:4px;border:1px solid #333;border-radius:1px"></div>
<div class="a" style="left:1598px;top:221px;width:9px;height:9px;border:1px solid #333;background:#fff"></div>
<div class="a" style="left:1600px;top:218px;width:9px;height:9px;border:1px solid #333;border-left:none;border-bottom:none"></div>
<div class="a" style="left:1601px;top:224px;width:3px;height:4px;border:1px solid #333"></div>
<svg class="a" style="left:1615px;top:218px" width="13" height="12"><path d="M2 2 L11 10 M11 2 L2 10" stroke="#333" stroke-width="3.6"/><path d="M2 2 L11 10 M11 2 L2 10" stroke="#fff" stroke-width="1.5"/></svg>
<!-- navigation bar -->
<div class="a" style="left:1600px;top:238px;width:35px;height:117px;border:2px solid #c4c4c4;border-radius:6px;background:#f3f3f3"></div>
<svg class="a" style="left:1622px;top:240px" width="11" height="11"><circle cx="5.5" cy="5.5" r="5" fill="#c8c8c8"/><path d="M3.5 3.5 L7.5 7.5 M7.5 3.5 L3.5 7.5" stroke="#fff" stroke-width="1.3"/></svg>
<svg class="a" style="left:1605px;top:257px" width="26" height="26"><path d="M11 2 L17 2 Q19 2 19 5 L19 13 Q19 18 13 18 L10 18 Q3 18 3 11 Q3 2 11 2 Z" fill="none" stroke="#b4b4b4" stroke-width="1.3"/><circle cx="10.5" cy="10.5" r="3.5" fill="none" stroke="#b4b4b4" stroke-width="1.3"/><path d="M13 13 L16 16" stroke="#b4b4b4" stroke-width="1.3"/><text x="11" y="25" font-size="10" font-weight="bold" fill="#7a9cc8" font-family="Liberation Sans">2D</text></svg>
<svg class="a" style="left:1614px;top:288px" width="8" height="5"><path d="M0 0h7l-3.5 4z" fill="#888"/></svg>
<div class="a" style="left:1605px;top:296px;width:26px;height:1px;background:#cfcfcf"></div>
<div class="a" style="left:1610px;top:305px;width:11px;height:11px;background:#bcdcab;border:1px solid #84b872"></div>
<svg class="a" style="left:1616px;top:311px" width="12" height="12"><circle cx="5" cy="5" r="3.5" fill="#eef2f4" stroke="#888" stroke-width="1.2"/><path d="M7.5 7.5 L11 11" stroke="#888" stroke-width="1.6"/></svg>
<svg class="a" style="left:1614px;top:330px" width="8" height="5"><path d="M0 0h7l-3.5 4z" fill="#888"/></svg>
<svg class="a" style="left:1622px;top:342px" width="11" height="11"><circle cx="5.5" cy="5.5" r="5" fill="#c8c8c8"/><path d="M2.5 4.5 H8.5 M2.5 6.5 H8.5" stroke="#fff" stroke-width="1"/></svg>
<!-- ===== PLYWOOD SECTION ===== -->
<svg class="a" style="left:820px;top:555px" width="460" height="58" viewBox="0 0 460 58">
<defs><clipPath id="inner"><rect x="0" y="5" width="451" height="45"/></clipPath></defs>
<g clip-path="url(#inner)" stroke="#262626" stroke-width="2.1" fill="none">
<path d="M-17.19 22.3 L-5.19 8.2 M-5.19 8.2 L-0.19 2 M-17.19 22.3 L-5.19 37.7 M-5.19 37.7 L-17.19 50 M-2.46 22.3 L9.54 8.2 M9.54 8.2 L14.54 2 M-2.46 22.3 L9.54 37.7 M9.54 37.7 L-2.46 50 M12.27 22.3 L24.27 8.2 M24.27 8.2 L29.27 2 M12.27 22.3 L24.27 37.7 M24.27 37.7 L12.27 50 M27.00 22.3 L39.00 8.2 M39.00 8.2 L44.00 2 M27.00 22.3 L39.00 37.7 M39.00 37.7 L27.00 50 M41.73 22.3 L53.73 8.2 M53.73 8.2 L58.73 2 M41.73 22.3 L53.73 37.7 M53.73 37.7 L41.73 50 M56.46 22.3 L68.46 8.2 M68.46 8.2 L73.46 2 M56.46 22.3 L68.46 37.7 M68.46 37.7 L56.46 50 M71.19 22.3 L83.19 8.2 M83.19 8.2 L88.19 2 M71.19 22.3 L83.19 37.7 M83.19 37.7 L71.19 50 M85.92 22.3 L97.92 8.2 M97.92 8.2 L102.92 2 M85.92 22.3 L97.92 37.7 M97.92 37.7 L85.92 50 M100.65 22.3 L112.65 8.2 M112.65 8.2 L117.65 2 M100.65 22.3 L112.65 37.7 M112.65 37.7 L100.65 50 M115.38 22.3 L127.38 8.2 M127.38 8.2 L132.38 2 M115.38 22.3 L127.38 37.7 M127.38 37.7 L115.38 50 M130.11 22.3 L142.11 8.2 M142.11 8.2 L147.11 2 M130.11 22.3 L142.11 37.7 M142.11 37.7 L130.11 50 M144.84 22.3 L156.84 8.2 M156.84 8.2 L161.84 2 M144.84 22.3 L156.84 37.7 M156.84 37.7 L144.84 50 M159.57 22.3 L171.57 8.2 M171.57 8.2 L176.57 2 M159.57 22.3 L171.57 37.7 M171.57 37.7 L159.57 50 M174.30 22.3 L186.30 8.2 M186.30 8.2 L191.30 2 M174.30 22.3 L186.30 37.7 M186.30 37.7 L174.30 50 M189.03 22.3 L201.03 8.2 M201.03 8.2 L206.03 2 M189.03 22.3 L201.03 37.7 M201.03 37.7 L189.03 50 M203.76 22.3 L215.76 8.2 M215.76 8.2 L220.76 2 M203.76 22.3 L215.76 37.7 M215.76 37.7 L203.76 50 M218.49 22.3 L230.49 8.2 M230.49 8.2 L235.49 2 M218.49 22.3 L230.49 37.7 M230.49 37.7 L218.49 50 M233.22 22.3 L245.22 8.2 M245.22 8.2 L250.22 2 M233.22 22.3 L245.22 37.7 M245.22 37.7 L233.22 50 M247.95 22.3 L259.95 8.2 M259.95 8.2 L264.95 2 M247.95 22.3 L259.95 37.7 M259.95 37.7 L247.95 50 M262.68 22.3 L274.68 8.2 M274.68 8.2 L279.68 2 M262.68 22.3 L274.68 37.7 M274.68 37.7 L262.68 50 M277.41 22.3 L289.41 8.2 M289.41 8.2 L294.41 2 M277.41 22.3 L289.41 37.7 M289.41 37.7 L277.41 50 M292.14 22.3 L304.14 8.2 M304.14 8.2 L309.14 2 M292.14 22.3 L304.14 37.7 M304.14 37.7 L292.14 50 M306.87 22.3 L318.87 8.2 M318.87 8.2 L323.87 2 M306.87 22.3 L318.87 37.7 M318.87 37.7 L306.87 50 M321.60 22.3 L333.60 8.2 M333.60 8.2 L338.60 2 M321.60 22.3 L333.60 37.7 M333.60 37.7 L321.60 50 M336.33 22.3 L348.33 8.2 M348.33 8.2 L353.33 2 M336.33 22.3 L348.33 37.7 M348.33 37.7 L336.33 50 M351.06 22.3 L363.06 8.2 M363.06 8.2 L368.06 2 M351.06 22.3 L363.06 37.7 M363.06 37.7 L351.06 50 M365.79 22.3 L377.79 8.2 M377.79 8.2 L382.79 2 M365.79 22.3 L377.79 37.7 M377.79 37.7 L365.79 50 M380.52 22.3 L392.52 8.2 M392.52 8.2 L397.52 2 M380.52 22.3 L392.52 37.7 M392.52 37.7 L380.52 50 M395.25 22.3 L407.25 8.2 M407.25 8.2 L412.25 2 M395.25 22.3 L407.25 37.7 M407.25 37.7 L395.25 50 M409.98 22.3 L421.98 8.2 M421.98 8.2 L426.98 2 M409.98 22.3 L421.98 37.7 M421.98 37.7 L409.98 50 M424.71 22.3 L436.71 8.2 M436.71 8.2 L441.71 2 M424.71 22.3 L436.71 37.7 M436.71 37.7 L424.71 50 M439.44 22.3 L451.44 8.2 M451.44 8.2 L456.44 2 M439.44 22.3 L451.44 37.7 M451.44 37.7 L439.44 50 M454.17 22.3 L466.17 8.2 M466.17 8.2 L471.17 2 M454.17 22.3 L466.17 37.7 M466.17 37.7 L454.17 50 M468.90 22.3 L480.90 8.2 M480.90 8.2 L485.90 2 M468.90 22.3 L480.90 37.7 M480.90 37.7 L468.90 50"/>
<path d="M0 8.2 H451 M0 22.3 H451 M0 37.7 H451" stroke-width="2"/>
</g>
<path d="M0 3 H451.5 Q454.5 3 454.5 6 V49 Q454.5 52.5 451.5 52.5 H0" fill="none" stroke="#000" stroke-width="6"/>
</svg>
<!-- ===== FILL PATTERNS DIALOG ===== -->
<div class="a" style="left:137px;top:270px;width:709px;height:463px;border:1px solid #4a4a4a;border-radius:7px 7px 5px 5px;background:linear-gradient(90deg,#f4fbfe 0%,#fafdff 20.5%,#d6eefb 22%,#dcf2fc 23.2%,#fdfeff 24.8%,#fcfdfe 60%,#f6f8fa 100%);box-shadow:2px 3px 10px rgba(0,0,0,0.35)"></div>
<div class="t" style="left:145px;top:280px;font-size:15px;color:#111">Fill Patterns</div>
<div class="a" style="left:779px;top:270px;width:59px;height:24px;border:1px solid #8c8c8c;border-top:none;border-radius:0 0 4px 4px;background:linear-gradient(#f8f8f8,#e8e8e8)"></div>
<svg class="a" style="left:800px;top:274px" width="18" height="16"><path d="M3 2.5 L15 13.5 M15 2.5 L3 13.5" stroke="#4a5068" stroke-width="5"/><path d="M3 2.5 L15 13.5 M15 2.5 L3 13.5" stroke="#fff" stroke-width="2.6"/></svg>
<div class="a" style="left:144px;top:304px;width:694px;height:422px;background:#f0f0f0;border:1px solid #6e6e6e"></div>
<div class="t" style="left:159px;top:321px;font-size:13px;color:#111">Name:</div>
<div class="a" style="left:157px;top:339px;width:548px;height:263px;background:#fff;border:1px solid #e2e2e2;border-top:2px solid #5f5f5f;border-left:2px solid #5f5f5f"></div>
<div class="a" style="left:721px;top:340px;width:103px;height:27px;border:1px solid #707070;border-radius:3px;background:linear-gradient(#f2f2f2 0%,#ebebeb 50%,#dddddd 51%,#cfcfcf 100%);box-shadow:inset 0 0 0 1px #fcfcfc;"></div><div class="t" style="left:721px;width:103px;text-align:center;top:348px;font-size:13px;color:#111">New</div>
<div class="a" style="left:721px;top:376px;width:103px;height:27px;border:1px solid #adb2b5;border-radius:3px;background:#f4f4f4"></div><div class="t" style="left:711px;width:113px;text-align:center;top:384px;font-size:13px;color:#8a8080">Edit</div>

<div class="a" style="left:157px;top:623px;width:548px;height:45px;border:1px solid #d5dfe5;border-radius:3px"></div>
<div class="a" style="left:163px;top:616px;width:79px;height:14px;background:#f0f0f0"></div>
<div class="t" style="left:166px;top:617px;font-size:13px;color:#111">Pattern Type</div>
<div class="a" style="left:178px;top:642px;width:14px;height:14px;border-radius:50%;border:1px solid #8a8a8a;background:radial-gradient(circle at 50% 40%,#f4f4f4,#d8d8d8 60%,#eaeaea)"></div>
<div class="t" style="left:196px;top:643px;font-size:13px;color:#111">Drafting</div>
<div class="a" style="left:621px;top:601px;width:84px;height:1px;background:#e0e0e0"></div>
<div class="a" style="left:606px;top:682px;width:102px;height:28px;border:1px solid #707070;border-radius:3px;background:linear-gradient(#f2f2f2 0%,#ebebeb 50%,#dddddd 51%,#cfcfcf 100%);box-shadow:inset 0 0 0 1px #fcfcfc;"></div><div class="t" style="left:606px;width:102px;text-align:center;top:690px;font-size:13px;color:#111">Cancel</div>
<div class="a" style="left:721px;top:682px;width:103px;height:28px;border:1px solid #707070;border-radius:3px;background:linear-gradient(#f2f2f2 0%,#ebebeb 50%,#dddddd 51%,#cfcfcf 100%);box-shadow:inset 0 0 0 1px #fcfcfc;"></div><div class="t" style="left:721px;width:103px;text-align:center;top:690px;font-size:13px;color:#111">Help</div>

<svg class="a" style="left:823px;top:712px" width="12" height="12"><g fill="#b0b0b0"><rect x="9" y="1" width="2" height="2"/><rect x="5" y="5" width="2" height="2"/><rect x="9" y="5" width="2" height="2"/><rect x="1" y="9" width="2" height="2"/><rect x="5" y="9" width="2" height="2"/><rect x="9" y="9" width="2" height="2"/></g></svg>

<div class="a" style="left:838px;top:579px;width:7px;height:34px;background:linear-gradient(90deg,#5a6878 0%,#c8d8e8 45%,#f4f8fc 60%,#8090a0 100%);opacity:0.85"></div>
<!-- ===== ADD SURFACE PATTERN DIALOG ===== -->
<div class="a" style="left:351px;top:197px;width:281px;height:609px;border:1px solid #4a4a4a;border-radius:7px 7px 5px 5px;background:linear-gradient(180deg,#eaf6fa 0%,#fdfdfd 6%,#f8fafb 100%);box-shadow:2px 3px 10px rgba(0,0,0,0.35)"></div>
<div class="t" style="left:360px;top:208px;font-size:15px;color:#111">Add Surface Pattern</div>
<div class="a" style="left:565px;top:197px;width:59px;height:24px;border:1px solid #8c8c8c;border-top:none;border-radius:0 0 4px 4px;background:linear-gradient(#f8f8f8,#e8e8e8)"></div>
<svg class="a" style="left:586px;top:201px" width="18" height="16"><path d="M3 2.5 L15 13.5 M15 2.5 L3 13.5" stroke="#4a5068" stroke-width="5"/><path d="M3 2.5 L15 13.5 M15 2.5 L3 13.5" stroke="#fff" stroke-width="2.6"/></svg>
<div class="a" style="left:359px;top:232px;width:265px;height:566px;background:#f0f0f0;border:1px solid #6e6e6e"></div>
<div class="a" style="left:372px;top:256px;width:238px;height:190px;border:1px solid #d5dfe5;border-radius:3px"></div>
<div class="a" style="left:377px;top:249px;width:51px;height:14px;background:#f0f0f0"></div>
<div class="t" style="left:380px;top:249px;font-size:13px;color:#111">Preview</div>
<div class="a" style="left:385px;top:271px;width:215px;height:122px;background:#fff"></div>
<svg class="a" style="left:385px;top:271px" width="215" height="122"><path d="M0 0 L215 122 M215 0 L0 122" stroke="#000" stroke-width="1" stroke-dasharray="3 3"/></svg>
<div class="t" style="left:385px;top:413px;font-size:13px;color:#111">Scale:</div>
<div class="a" style="left:373px;top:512px;width:14px;height:14px;border-radius:50%;border:1px solid #8a8a8a;background:radial-gradient(circle at 50% 40%,#f4f4f4,#d8d8d8 60%,#eaeaea)"></div>
<div class="t" style="left:391px;top:513px;font-size:13px;color:#111">Simple</div>
<div class="t" style="left:371px;top:553px;font-size:13px;color:#111">Name:</div>
<div class="a" style="left:453px;top:549px;width:160px;height:24px;background:#fff;border:1px solid #dcdcdc;border-radius:2px"></div>
<div class="t" style="left:459px;top:554px;font-size:13px;color:#111">PLYWOOD</div>
<div class="a" style="left:371px;top:583px;width:239px;height:149px;border:1px solid #d5dfe5;border-radius:3px"></div>
<div class="a" style="left:377px;top:575px;width:49px;height:14px;background:#f0f0f0"></div>
<div class="t" style="left:380px;top:575px;font-size:13px;color:#111">Custom</div>
<div class="a" style="left:381px;top:594px;width:86px;height:28px;border:1px solid #707070;border-radius:3px;background:linear-gradient(#f2f2f2 0%,#ebebeb 50%,#dddddd 51%,#cfcfcf 100%);box-shadow:inset 0 0 0 1px #fcfcfc;"></div><div class="t" style="left:381px;width:86px;text-align:center;top:602px;font-size:13px;color:#111">Import...</div>

<div class="a" style="left:473px;top:593px;width:126px;height:60px;background:#fff;border:1px solid #828790"></div>
<div class="a" style="left:475px;top:595px;width:122px;height:16px;background:#3399ff"></div>
<div class="t" style="left:477px;top:597px;font-size:12.5px;color:#fff">PLYWOOD</div>
<div class="t" style="left:424px;top:665px;font-size:13px;color:#111">File units are:</div>
<div class="a" style="left:511px;top:661px;width:88px;height:24px;background:#f0f0f0;border:1px solid #c4c4c4;border-radius:2px"></div>
<div class="t" style="left:517px;top:666px;font-size:13px;color:#888">inches</div>
<div class="t" style="left:428px;top:697px;font-size:13px;color:#111">Import scale:</div>
<div class="a" style="left:511px;top:693px;width:88px;height:24px;background:#fff;border:1px solid #dcdcdc;border-radius:2px"></div>
<div class="t" style="left:517px;top:698px;font-size:13px;color:#111">.2</div>
<div class="a" style="left:394px;top:754px;width:103px;height:28px;border:1px solid #707070;border-radius:3px;background:linear-gradient(#f2f2f2 0%,#ebebeb 50%,#dddddd 51%,#cfcfcf 100%);box-shadow:inset 0 0 0 1px #fcfcfc;"></div><div class="t" style="left:394px;width:103px;text-align:center;top:762px;font-size:13px;color:#111">OK</div>
<div class="a" style="left:506px;top:754px;width:103px;height:28px;border:1px solid #707070;border-radius:3px;background:linear-gradient(#f2f2f2 0%,#ebebeb 50%,#dddddd 51%,#cfcfcf 100%);box-shadow:inset 0 0 0 1px #fcfcfc;"></div><div class="t" style="left:506px;width:103px;text-align:center;top:762px;font-size:13px;color:#111">Cancel</div>


<!-- ===== PATTERN TOO DENSE DIALOG ===== -->
<div class="a" style="left:470px;top:391px;width:469px;height:188px;border:1px solid #333;border-radius:7px 7px 5px 5px;background:linear-gradient(90deg,#b0d0ee 0%,#c6e0f6 15%,#b6d4f0 35%,#a8c6e4 55%,#c4dcf2 80%,#b8d6f2 100%);box-shadow:3px 4px 12px rgba(0,0,0,0.5)"></div>
<div class="a" style="left:471px;top:392px;width:467px;height:186px;border:1px solid rgba(255,255,255,0.6);border-radius:6px 6px 4px 4px"></div>
<div class="t" style="left:479px;top:402px;font-size:15px;color:#111">Pattern Too Dense</div>
<div class="a" style="left:873px;top:391px;width:59px;height:24px;border:1px solid #4a1a10;border-top:none;border-radius:0 0 4px 4px;background:linear-gradient(#e8a898,#d0705c 50%,#b83820 52%,#d86a4a)"></div>
<svg class="a" style="left:893px;top:395px" width="20" height="17"><path d="M3.5 3 L16.5 14 M16.5 3 L3.5 14" stroke="#4a3a3a" stroke-width="5.6"/><path d="M3.5 3 L16.5 14 M16.5 3 L3.5 14" stroke="#fff" stroke-width="3.4"/></svg>
<div class="a" style="left:478px;top:426px;width:454px;height:146px;background:#f0f0f0;border:1px solid #5a6a7a"></div>
<div class="a" style="left:479px;top:427px;width:452px;height:98px;background:#fff;border-bottom:1px solid #dfdfdf"></div>
<div class="t" style="left:489px;top:443px;font-size:19.5px;letter-spacing:0.06px;color:#1c3b9e">The pattern with the values you have supplied is</div>
<div class="t" style="left:489px;top:471px;font-size:19.5px;letter-spacing:-0.12px;color:#1c3b9e">too dense. Try increasing the Line Spacing values.</div>
<div class="a" style="left:842px;top:535px;width:77px;height:27px;border:1px solid #3c8fc8;border-radius:3px;background:linear-gradient(#f2f6fa 0%,#e6eef4 50%,#d4dee8 51%,#c6d2de 100%);box-shadow:inset 0 0 0 1px #5ad0f8"></div>
<div class="t" style="left:842px;top:541px;width:77px;text-align:center;font-size:15px;color:#111">Close</div>
<!-- status bar -->
<div class="a" style="left:15px;top:947px;width:1644px;height:26px;background:linear-gradient(#f6f6f6,#e8e8e8 40%,#d2d2d2);border-top:1px solid #8a8a8a"></div>
<div class="t" style="left:18px;top:954px;font-size:15px;color:#111">Ready</div>
<div class="a" style="left:639px;top:949px;width:1px;height:23px;background:#d4d4d4"></div>
<div class="a" style="left:1635px;top:949px;width:1px;height:23px;background:#d0d0d0"></div>
<svg class="a" style="left:1531px;top:953px" width="18" height="16"><path d="M1.5 1.5 H16 L10.5 7.5 V13.5 H7.5 V7.5 Z" fill="#e8eaec" stroke="#445" stroke-width="1.2" stroke-linejoin="round"/></svg>
<div class="t" style="left:1548px;top:957px;font-size:14px;color:#111">:0</div>
<svg class="a" style="left:1645px;top:958px" width="12" height="12"><g fill="#fff"><rect x="9" y="1" width="2" height="2"/><rect x="5" y="5" width="2" height="2"/><rect x="9" y="5" width="2" height="2"/><rect x="1" y="9" width="2" height="2"/><rect x="5" y="9" width="2" height="2"/><rect x="9" y="9" width="2" height="2"/></g><g fill="#aaa"><rect x="10" y="2" width="1" height="1"/><rect x="6" y="6" width="1" height="1"/><rect x="10" y="6" width="1" height="1"/><rect x="2" y="10" width="1" height="1"/><rect x="6" y="10" width="1" height="1"/><rect x="10" y="10" width="1" height="1"/></g></svg>
<svg class="a" style="left:1643px;top:932px" width="12" height="12"><g fill="#aaa"><rect x="9" y="1" width="2" height="2"/><rect x="5" y="5" width="2" height="2"/><rect x="9" y="5" width="2" height="2"/><rect x="1" y="9" width="2" height="2"/><rect x="5" y="9" width="2" height="2"/><rect x="9" y="9" width="2" height="2"/></g></svg>
<div class="a" style="left:1658px;top:38px;width:1px;height:935px;background:#5a6a7a"></div>
<!-- bottom frame -->
<div class="a" style="left:0;top:980px;width:1668px;height:4px;background:#2c2c2e"></div>
<div class="a" style="left:140px;top:981px;width:940px;height:3px;background:#3a3a3c"></div>
<div class="a" style="left:7px;top:972px;width:1661px;height:9px;border-radius:0 0 8px 8px;border-bottom:1px solid #333;background:linear-gradient(90deg,#5a6a7c 0%,#8ea4bc 3%,#9cb8d4 8%,#b0cce8 12%,#a8c8e8 50%,#b0d0ec 79%,#34424f 79.6%,#2e3a48 97%,#a8c8e8 99%)"></div>
</body></html>
